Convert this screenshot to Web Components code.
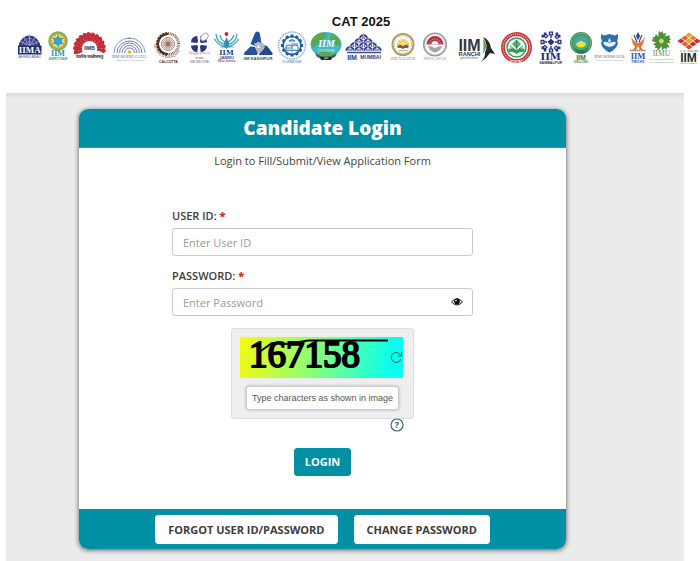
<!DOCTYPE html>
<html lang="en">
<head>
<meta charset="utf-8">
<meta name="viewport" content="width=device-width, initial-scale=1">
<title>CAT 2025 - Candidate Login</title>
<style>
  body {
    margin: 0;
    background: #fff;
    color: #444;
    font: 11px/16px "Open Sans", "Noto Sans", sans-serif;
  }
</style>
</head>
<body>
<login-page>
  <exam-header slot="header" heading="CAT 2025"></exam-header>
  <login-card heading="Candidate Login">
    <span slot="intro">Login to Fill/Submit/View Application Form</span>
    <login-field label="USER ID:" placeholder="Enter User ID"></login-field>
    <login-field label="PASSWORD:" placeholder="Enter Password" type="password"></login-field>
    <captcha-box code="167158"></captcha-box>
    <action-button primary>LOGIN</action-button>
    <action-button slot="footer">FORGOT USER ID/PASSWORD</action-button>
    <action-button slot="footer">CHANGE PASSWORD</action-button>
  </login-card>
</login-page>

<script>
'use strict';

const SERIF = 'font-family="Liberation Serif, serif"';
const SANS = 'font-family="Liberation Sans, sans-serif"';

// repeats a shape n times around a centre
const around = (n, cx, cy, shape, from = 0, step = 360 / n) =>
  Array.from({length: n}, (_, i) => `<g transform="rotate(${from + i * step} ${cx} ${cy})">${shape}</g>`).join('');

const text = (x, y, size, fill, str, more = SANS) =>
  `<text x="${x}" y="${y}" font-size="${size}" fill="${fill}" text-anchor="middle" ${more}>${str}</text>`;

// rows of scallops that build the pyramid of the Mumbai mark
const scallops = () => {
  let out = '';
  for (let row = 0; row < 4; row++) {
    for (let i = 0; i <= row; i++) {
      const x = 20.5 + (i - row / 2) * 9;
      const y = 9 + row * 4;
      out += `<path d="M${x - 5} ${y}a5 5 0 0 1 10 0z" fill="#2b348c" stroke="#fff" stroke-width=".6"/>
        <path d="M${x - 2.5} ${y}a2.5 2.5 0 0 1 5 0M${x} ${y}v-4" fill="none" stroke="#fff" stroke-width=".8"/>`;
    }
  }
  return out;
};

const diamonds = () => {
  let out = '';
  const colours = ['#e9a12c', '#e2622a', '#e2822a', '#c9302c', '#e9a12c', '#c9302c', '#e2622a', '#c9302c', '#d9502c'];
  const spots = [[12, 5], [8, 8], [16, 8], [4, 11], [12, 11], [20, 11], [8, 14], [16, 14], [12, 17]];
  spots.forEach(([x, y], i) => {
    out += `<path d="M${x} ${y - 2.5}l3.6 2.500-3.600 2.500-3.600-2.500z" fill="${colours[i]}"/>`;
  });
  return out;
};

// width of the drawing, name, shapes
const LOGOS = {
  ahmedabad: [31, 'IIM Ahmedabad', `
    <path d="M5 17v-3a11 12 0 0 1 21 0v3z" fill="#373c86"/>
    <g fill="none" stroke="#c3c6e4" stroke-width=".7">
      <path d="M15.5 16V4M15.5 16L9 6M15.5 16L22 6M15.5 16L6 11M15.5 16L25 11"/>
      <path d="M11 16a4.5 4.5 0 0 1 9 0M8 16a7.5 7.5 0 0 1 15 0" stroke-dasharray="1.5 1"/>
    </g>
    <path d="M4 15.5h23.5v9H4z" fill="#262a72"/>
    ${text(15.8, 23, 9, '#fff', 'IIMA', SERIF + ' font-weight="bold"')}
    ${text(15.8, 28, 3.6, '#5560a8', 'AHMEDABAD')}`],
  amritsar: [26, 'IIM Amritsar', `
    <circle cx="13" cy="11" r="8.5" fill="#d9e9a0" stroke="#6fb85e" stroke-width="2.5"/>
    ${around(12, 13, 11, '<circle cx="13" cy="4" r="1.5" fill="#e79a3c"/>')}
    ${around(6, 13, 11, '<path d="M13 5l2.5 4h-5z" fill="#2fa9b8"/>')}
    <circle cx="13" cy="11" r="3.8" fill="#3ba3c2"/>
    ${text(13, 26, 8, '#2c92a6', 'IIM', SERIF + ' font-weight="bold"')}
    ${text(13, 30, 3.6, '#36a8bd', 'AMRITSAR', SANS + ' font-weight="bold"')}`],
  bangalore: [38, 'IIM Bangalore', `
    ${around(13, 18.5, 18.5, '<path d="M16.8 11q-1.600-5 .2-9 3 0 4.200 2.300-2 1.200-2 6.700z" fill="#bf2d37"/>', -104, 17)}
    ${text(18.5, 20, 5, '#333', 'IIMB', SANS + ' font-weight="bold"')}
    ${text(18.5, 28, 4, '#222', 'तेजस्वि नावधीतमस्तु', SANS + ' font-weight="bold"')}`],
  bodhgaya: [41, 'IIM Bodh Gaya', `
    <g fill="none" stroke="#6f7cb8">
      <path d="M5 23a15.500 15 0 0 1 31 0" stroke-width=".8"/>
      <path d="M8 23a12.500 12 0 0 1 25 0M10.500 23a10 10 0 0 1 20 0M13 23a7.500 7.500 0 0 1 15 0M15.500 23a5 5 0 0 1 10 0"/>
    </g>
    <path d="M17 9q3.500 0 3.500-2.500Q20.500 9 24 9z" fill="#6f7cb8"/>
    <circle cx="20.500" cy="22" r="1.800" fill="#e3b23a"/>
    ${text(20.5, 28, 4.6, '#5d669c', 'IIM BODH GAYA', SERIF)}
    ${text(20.5, 31, 2, '#8a90b5', 'Indian Institute of Management')}`],
  calcutta: [37, 'IIM Calcutta', `
    ${around(11, 18, 14, '<path d="M16.800 2h2.400v3h-2.400z" fill="#5b2f22"/>', 190, 16)}
    <path d="M18 24a10 10 0 0 1 0-20" fill="none" stroke="#5b2f22" stroke-width="1.800"/>
    <path d="M18 3.500a10.500 10.500 0 0 1 0 21" fill="none" stroke="#8a6a58" stroke-width="2.800" stroke-dasharray="1 .7"/>
    <circle cx="18" cy="14" r="6.500" fill="#f3ebe6" stroke="#8a6a5e" stroke-width=".8"/>
    ${around(16, 18, 14, '<path d="M18 8.500v4" stroke="#8a5f52" stroke-width=".6"/>')}
    <circle cx="18" cy="14" r="2.300" fill="#a5705f"/>
    <path id="arc" d="M4 14a14 14 0 0 0 28 0" fill="none"/>
    <text font-size="2.600" fill="#5b3a30" ${SANS}><textPath href="#arc">INSTITUTE OF MANAGEMENT</textPath></text>
    ${text(18.5, 33, 3.5, '#4a2a20', 'CALCUTTA', SANS + ' font-weight="bold"')}`],
  indore: [25, 'IIM Indore', `
    ${around(4, 12, 14, '<path d="M7.500 7q4.500-3.500 9 0l-3.500 4.600q-1 .5-2 0z" fill="#2c3486"/>', -45)}
    <ellipse cx="17.500" cy="7" rx="4.500" ry="3" transform="rotate(-45 17.500 7)" fill="#fff" stroke="#777ba8" stroke-width=".7"/>
    ${text(12.5, 24, 3, '#a04a62', 'सिद्धिमूलं प्रबंधनम्')}
    ${text(12.5, 28.5, 3.4, '#666', 'भा.प्र.सं.')}
    ${text(12.5, 33, 3.4, '#666', 'IIM INDORE')}`],
  jammu: [30, 'IIM Jammu', `
    <circle cx="14.500" cy="4" r="1.900" fill="#d3242e"/>
    <g fill="none" stroke="#37a3c4" stroke-width="1.300">
      <path d="M4 4q1 10 10.500 10.500Q24 14 25 4M2.500 9q4 7 12 7.500Q23 16 26.500 9M8 5q1 6 6.500 7.500Q20 11 22 5"/>
    </g>
    <path d="M14.500 7l3 7-3 5-3-5zM7 17.500q3-2 7.500-1 5-1 8 1-4-.5-8 .5-4-1-7.500-.5z" fill="#2f8fb8"/>
    ${text(14.5, 24.5, 7, '#20408e', 'IIM', 'font-family="DejaVu Serif, serif" font-weight="bold"')}
    ${text(14.5, 28.5, 4, '#2b5a9c', 'JAMMU', SANS + ' font-weight="bold"')}
    ${text(14.5, 32, 2.8, '#b8424e', 'IIM at Jammu', SANS + ' font-weight="bold"')}`],
  kashipur: [33, 'IIM Kashipur', `
    <path d="M15.500 1.500q1.500 0 2.300 1.800L19.500 13l-4-1-2.500 4-4.500-2 4.500-11q.7-1.500 2.500-1.500z" fill="#24539b"/>
    <path d="M8.500 16.500l4.500.5 3 6.500-1.500 1.500H2.500q-1-1 0-2.500z" fill="#24539b"/>
    <path d="M21 15l4 1 5.500 7q.5 1.500-.5 2H17l1-3.500 3.500-2z" fill="#1f4a90"/>
    <path d="M12 13h9l2 4-4 5.500h-3.500z" fill="#b1b6c4"/>
    <path d="M16.500 14l2 4h-4z" fill="#e6e8ee"/>
    ${text(16, 29.5, 4.2, '#2a4c8e', 'IIM KASHIPUR', SANS + ' font-weight="bold"')}`],
  kozhikode: [34, 'IIM Kozhikode', `
    <circle cx="17" cy="15.500" r="13.500" fill="none" stroke="#7ba6c9" stroke-width="1.600" stroke-dasharray="1 .8"/>
    <circle cx="17" cy="15.500" r="9" fill="#eef5fa" stroke="#2a6ca9" stroke-width="1.500"/>
    ${around(12, 17, 15.5, '<path d="M15.500 4.500h3v3h-3z" fill="#1f5f9e"/>')}
    <path d="M11 16q3-2 6 0 3-2 6 0v5q-3-2-6 0-3-2-6 0zM14 11q3-3 6 0z" fill="none" stroke="#2a6ca9" stroke-width=".9"/>
    <path d="M11 18h6M17 13v8M18 14h5" stroke="#2a6ca9" stroke-width=".8"/>
    ${text(17, 33, 3.2, '#2a6ca9', 'KOZHIKODE')}`],
  lucknow: [34, 'IIM Lucknow', `
    <ellipse cx="17" cy="14.500" rx="15.500" ry="12.500" fill="#43b9c0"/>
    <path d="M4 8q6-7 13-5 2 3-2 5l-4 5q-4 1-7 5-3-5 0-10zM22 3q8 3 10 11-4 3-7-1l-4-4zM9 21l9-1 6 3-5 4q-6 0-10-6z" fill="#57a850"/>
    <path d="M6 23q11 7 22 0l-2 4q-9 5-18 0z" fill="#46604d"/>
    <path d="M11 27h12l-1 3H12z" fill="#1f2521"/>
    ${text(17.5, 17, 10, '#f4fbf6', 'IIM', SERIF + ' font-style="italic" font-weight="bold"')}
    ${text(17, 22, 3.2, '#e8f5ee', 'LUCKNOW', SANS)}
    ${text(17, 29, 2, '#fff', 'सुप्रबंधे')}`],
  mumbai: [43, 'IIM Mumbai', `
    ${scallops()}
    <path d="M4 22.500h34" stroke="#3f489a" stroke-width="1.400"/>
    <circle cx="20.500" cy="7.500" r="1.200" fill="#d88a3c"/>
    ${text(9, 30, 7, '#2b348c', 'IIM', SANS + ' font-weight="bold"')}
    ${text(27.5, 29, 5, '#2b348c', 'MUMBAI', SANS + ' font-weight="bold"')}`],
  nagpur: [32, 'IIM Nagpur', `
    <circle cx="17" cy="14.500" r="10.500" fill="#fff" stroke="#b79a5e" stroke-width="2"/>
    <circle cx="17" cy="14.500" r="8.500" fill="none" stroke="#7a6a50" stroke-width=".6" stroke-dasharray="1 1"/>
    <path d="M11 15a6 6 0 0 1 12 0z" fill="#f2bd2d"/>
    ${around(5, 17, 15, '<path d="M17 8v6" stroke="#fff" stroke-width=".7"/>', -60, 30)}
    <path d="M11 16q3-2 6 0 3-2 6 0l-1 2q-3-1-5 1-3-2-5-1z" fill="#6a5e4c"/>
    <path d="M13 20.500h8" stroke="#c0ad80"/>
    ${text(17, 30, 4.2, '#888', 'IIM NAGPUR', SERIF)}`],
  raipur: [34, 'IIM Raipur', `
    <circle cx="17" cy="14.500" r="11.300" fill="#fff" stroke="#9a9a9e" stroke-width="1.600"/>
    <circle cx="17" cy="14.500" r="9.500" fill="none" stroke="#b5b5b8" stroke-width=".8" stroke-dasharray="1 .8"/>
    <path d="M8.500 14.500a8.500 8.500 0 0 1 17 0z" fill="#b5323e"/>
    <path d="M13.500 14.500a3.500 3.500 0 0 1 7 0z" fill="#fff"/>
    ${around(7, 17, 14.5, '<path d="M17 8v2" stroke="#e9b9bd" stroke-width=".6"/>', -75, 25)}
    <path d="M10 16q3.500 0 7 2 3.500-2 7-2-1 5-7 6.500-6-1.500-7-6.500z" fill="#a3a5aa"/>
    ${text(17, 30, 4.2, '#b98a8f', 'IIM RAIPUR', SERIF)}`],
  ranchi: [46, 'IIM Ranchi', `
    ${text(17.5, 20.5, 16, '#33363a', 'IIM', SANS + ' font-weight="bold"')}
    ${text(17.5, 25.5, 5.6, '#33363a', 'RANCHI', SANS + ' font-weight="bold"')}
    ${text(17.5, 29, 3.2, '#777', 'सुधीर्धर्मेण जीवतः')}
    <path d="M31 7q7 3 8 11l4 6-5-1q-3 5-9 9 5-6 4-10 4-6-2-15z" fill="#25282a"/>
    <path d="M31 9q4 4 3 9l-3 6q1-8 0-15z" fill="#6aa640"/>`],
  rohtak: [37, 'IIM Rohtak', `
    <circle cx="18.500" cy="17.500" r="13.500" fill="#fff" stroke="#c63a3f" stroke-width="4"/>
    <circle cx="18.500" cy="17.500" r="13.500" fill="none" stroke="#f2c9c9" stroke-width="1.200" stroke-dasharray="1 1.200"/>
    <circle cx="18.500" cy="17.500" r="9.500" fill="#eef7f0" stroke="#3d9860" stroke-width="1.500"/>
    <path d="M10.500 19q4.500-2 8 1 3.500-3 8-1v3q-4.500-1-8 2-3.500-3-8-2z" fill="#3d9860"/>
    <path d="M18.500 9.500l4.500 4.500-4.500 5-4.500-5z" fill="#5fae7a"/>
    <path d="M12 16l4 3M25 16l-4 3M18.500 10v9" stroke="#2f8552" stroke-width=".9"/>
    ${text(18.5, 32.5, 3, '#fff', 'ROHTAK')}`],
  sambalpur: [32, 'IIM Sambalpur', `
    <g fill="#2b348c">
      <path d="M13.500 9.500h5v5h-5z" transform="rotate(45 16 12)"/>
      ${around(4, 16, 12, '<path d="M13.800 1.500h4.400v4h-4.400zM15.300 5h1.400v3h-1.400zM22 4l2.800 2.800L22 9.600l-2.800-2.800z"/>')}
      ${around(4, 16, 12, '<path d="M8.800 2.500h2.600v2.600H8.800zM20.600 2.500h2.600v2.600h-2.600z"/>')}
    </g>
    ${around(4, 16, 12, '<path d="M15.200 2.800h1.600v1.400h-1.600zM21.300 6.200h1.400v1.300h-1.400z" fill="#fff"/>')}
    ${text(15.7, 29.5, 10, '#262b7c', 'IIM', 'font-family="DejaVu Serif, serif" font-weight="bold"')}
    ${text(15.7, 33.5, 3.6, '#262b7c', 'SAMBALPUR', SANS + ' font-weight="bold"')}`],
  shillong: [26, 'IIM Shillong', `
    <circle cx="14" cy="13" r="9.500" fill="#4fa878" stroke="#3a8f63" stroke-width="3"/>
    <circle cx="14" cy="13" r="9.500" fill="none" stroke="#b9dcc8" stroke-width="1" stroke-dasharray="1 1"/>
    <path d="M8 13a6 5 0 0 1 12 0z" fill="#3da7c4"/>
    <path d="M9 13.500a5 4 0 0 0 10 0l-5-3z" fill="#ece23c"/>
    <path d="M7 18q7 4 14 0l-2 4q-5 3-10 0z" fill="#2c7f55"/>
    ${text(14, 29.5, 7, '#2b7f58', 'IIM', SANS + ' font-weight="bold"')}
    ${text(14, 33, 2.8, '#3a8f63', 'SHILLONG', SANS + ' font-weight="bold"')}`],
  sirmaur: [35, 'IIM Sirmaur', `
    <path d="M8 4l3 1.500 5.500-1.500L22 5.500 25 4v4l-1 3 1 2q-1 6-8.500 9.500Q9 19 8 13l1-2-1-3z" fill="#2e6fae"/>
    <path d="M10 12.500q3-2 6.500 1 3.500-3 6.500-1-1 3.500-6.500 4.500-5.500-1-6.500-4.500z" fill="#eef5fb"/>
    <path d="M16.500 8l1.500 2.500-1.500 4-1.500-4z" fill="#cfe0f0"/>
    ${text(16.5, 27.5, 4.8, '#6a7484', 'IIM SIRMAUR', SERIF)}
    ${text(16.5, 30.5, 2, '#999', 'Indian Institute of Management')}`],
  trichy: [20, 'IIM Tiruchirappalli', `
    <path d="M10 2l2 4-1.500 3.500h-1L8 6z" fill="#2d4a90"/>
    <path d="M3 5q1 6 7 8 6-2 7-8-1 9-4 12l2 3h-3l-2-4-2 4H5l2-3Q4 14 3 5z" fill="#e3763a"/>
    <path d="M6 5l3 7M14 5l-3 7" stroke="#37549a" stroke-width="1.300"/>
    <path d="M2 20.500h16" stroke="#c05a48" stroke-width="1.300" stroke-dasharray="1.500 .7"/>
    ${text(10, 29, 8.5, '#2a559f', 'IIM', SERIF + ' font-weight="bold"')}
    ${text(10, 33, 3.6, '#2a559f', 'TRICHY', SANS + ' font-weight="bold"')}`],
  udaipur: [29, 'IIM Udaipur', `
    ${around(5, 13.5, 11, '<path d="M12 9.500q-4-3-2.500-8l2 1.500 1.500-2 1 2.500 3-1q-.5 4-2.500 7z" fill="#4c9138"/>', 10)}
    <path d="M11.500 9.500l2.500-1 2 2-1 2.500-2.500.5-1.500-2z" fill="#d9dc5a"/>
    ${text(13.5, 26, 7.6, '#5c8a4a', 'IIMU', SERIF)}
    ${text(13.5, 30, 2.4, '#6c9a58', 'INDIAN INSTITUTE OF')}
    ${text(13.5, 32.5, 2, '#6c9a58', 'MANAGEMENT UDAIPUR')}`],
  vizag: [23, 'IIM Visakhapatnam', `
    ${diamonds()}
    ${text(12, 21.5, 2, '#333', 'भा.प्र.सं. विशाखापट्टनम')}
    ${text(11.5, 31.5, 12, '#2a2a2a', 'IIM', SANS + ' font-weight="bold"')}
    ${text(11.5, 34, 2, '#444', 'VISAKHAPATNAM')}`],
};

class InstituteLogo extends HTMLElement {
  connectedCallback() {
    const [width, title, shapes] = LOGOS[this.getAttribute('name')];
    this.attachShadow({mode: 'open'}).innerHTML = `
      <style>
        :host { display: block; flex: none; }
        svg { display: block; overflow: visible; }
      </style>
      <svg width="${width}" height="35" viewBox="0 0 ${width} 35" role="img" aria-label="${title}">${shapes}</svg>
    `;
  }
}

class ExamHeader extends HTMLElement {
  connectedCallback() {
    this.attachShadow({mode: 'open'}).innerHTML = `
      <style>
        :host { display: block; padding: 14px 0 28px 14px; }
        h1 {
          margin: 0;
          padding-left: 8px;
          color: #111;
          font: bold 13px/16px "Liberation Sans", Arial, sans-serif;
          text-align: center;
        }
        .strip {
          display: flex;
          justify-content: space-between;
        }
      </style>
      <h1>${this.getAttribute('heading')}</h1>
      <div class="strip">
        ${Object.keys(LOGOS).map(name => `<institute-logo name="${name}"></institute-logo>`).join('')}
      </div>
    `;
  }
}

class LoginPage extends HTMLElement {
  connectedCallback() {
    this.attachShadow({mode: 'open'}).innerHTML = `
      <style>
        :host { display: flex; flex-direction: column; min-height: 100vh; }
        main {
          flex: 1;
          margin: 0 16px 0 6px;
          padding: 16px 118px 12px 73px;
          background: #ebebeb linear-gradient(#dcdcdc, #ebebeb) no-repeat 0 0 / 100% 6px;
        }
      </style>
      <slot name="header"></slot>
      <main><slot></slot></main>
    `;
  }
}

class LoginCard extends HTMLElement {
  connectedCallback() {
    this.attachShadow({mode: 'open'}).innerHTML = `
      <style>
        :host {
          display: block;
          overflow: hidden;
          border-radius: 9px;
          background: #fff;
          box-shadow: 0 1px 5px #555;
        }
        h2 {
          margin: 0;
          padding: 7px 0;
          border-bottom: 1px solid #6a7f82;
          background: #008fa3;
          color: #fff;
          font-size: 19px;
          font-weight: 800;
          line-height: 24px;
          text-align: center;
        }
        .intro {
          margin: 0;
          padding: 5px 0 39px;
          text-align: center;
        }
        form {
          display: flex;
          flex-direction: column;
          align-items: center;
          padding: 0 93px 33px;
        }
        footer {
          display: flex;
          justify-content: center;
          gap: 16px;
          padding: 6px 0 5px;
          background: #008fa3;
        }
      </style>
      <h2>${this.getAttribute('heading')}</h2>
      <p class="intro"><slot name="intro"></slot></p>
      <form><slot></slot></form>
      <footer><slot name="footer"></slot></footer>
    `;
  }
}

class LoginField extends HTMLElement {
  connectedCallback() {
    const type = this.getAttribute('type') || 'text';
    this.attachShadow({mode: 'open'}).innerHTML = `
      <style>
        :host { display: block; align-self: stretch; margin-bottom: 12px; }
        label {
          display: block;
          margin-bottom: 4px;
          color: #3d3d3d;
          font-weight: 600;
        }
        label span { color: #d9252b; font-weight: 800; }
        .box {
          display: flex;
          align-items: center;
          border: 1px solid #ccc;
          border-radius: 3px;
          background: #fff;
        }
        input {
          flex: 1;
          min-width: 0;
          height: 26px;
          padding: 0 10px;
          border: 0;
          outline: 0;
          background: none;
          color: #444;
          font: inherit;
          box-sizing: border-box;
        }
        input::placeholder { color: #999; opacity: 1; }
        button {
          display: flex;
          padding: 0;
          margin-right: 9px;
          border: 0;
          background: none;
        }
      </style>
      <label for="field">${this.getAttribute('label')} <span>*</span></label>
      <div class="box">
        <input id="field" type="${type}" placeholder="${this.getAttribute('placeholder')}">
        ${type === 'password' ? `
          <button type="button" aria-label="Show password">
            <svg width="12" height="10" viewBox="0 0 12 10">
              <path d="M.5 5Q6-1.500 11.500 5 6 11 .5 5z" fill="#fff" stroke="#222"/>
              <circle cx="6" cy="4.500" r="2.900" fill="#111"/>
              <circle cx="5" cy="3.500" r=".8" fill="#fff"/>
            </svg>
          </button>` : ''}
      </div>
    `;
  }
}

class CaptchaBox extends HTMLElement {
  connectedCallback() {
    this.attachShadow({mode: 'open'}).innerHTML = `
      <style>
        :host { display: block; }
        .panel {
          padding: 8px;
          border: 1px solid #ddd;
          border-radius: 3px;
          background: #eee;
        }
        .image {
          display: flex;
          align-items: center;
          justify-content: space-between;
          width: 163px;
          height: 41px;
          margin: 0 2px 8px 0;
          background: linear-gradient(100deg, #f6fa10, #7dff80 50%, #08fff0 92%);
        }
        svg { display: block; overflow: visible; }
        button { display: flex; padding: 0; border: 0; background: none; }
        input {
          display: block;
          width: 153px;
          height: 24px;
          margin: 0 0 0 6px;
          padding: 0 5px;
          border: 1px solid #ccc;
          border-radius: 3px;
          box-shadow: 0 0 3px #aaa;
          box-sizing: border-box;
          color: #444;
          font: 9px "Liberation Sans", Arial, sans-serif;
        }
        input::placeholder { color: #555; opacity: 1; }
        .help { margin: -1px 10px 16px auto; }
      </style>
      <div class="panel">
        <div class="image">
          <svg width="150" height="41" viewBox="0 0 150 41" role="img" aria-label="Captcha">
            <text x="9" y="30" font-family="Liberation Serif, serif" font-size="37" fill="#000" stroke="#000" stroke-width="2">${this.getAttribute('code')}</text>
            <path d="M18 16l14-10 16 1 20-3.500h80" fill="none" stroke="#000" stroke-width="2"/>
          </svg>
          <button type="button" aria-label="Reload captcha">
            <svg width="13" height="13" viewBox="0 0 13 13" fill="none" stroke="#22665f">
              <path d="M10.500 4A5 5 0 1 0 11 8"/>
              <path d="M11.500 1v4h-4"/>
            </svg>
          </button>
        </div>
        <input type="text" aria-label="Captcha characters" placeholder="Type characters as shown in image">
      </div>
      <button class="help" type="button" aria-label="Help">
        <svg width="14" height="14" viewBox="0 0 14 14">
          <circle cx="7" cy="7" r="6" fill="#fff" stroke="#456873" stroke-width="1.200"/>
          <text x="7" y="10" font-family="Open Sans, sans-serif" font-size="9" font-weight="700" fill="#34545f" text-anchor="middle">?</text>
        </svg>
      </button>
    `;
  }
}

class ActionButton extends HTMLElement {
  connectedCallback() {
    this.attachShadow({mode: 'open'}).innerHTML = `
      <style>
        :host { display: block; }
        button {
          display: block;
          padding: 6px 12px 5px;
          border: 1px solid #fff;
          border-radius: 3px;
          background: #fff;
          color: #3d3d3d;
          font: inherit;
          font-weight: 700;
        }
        :host([primary]) button {
          padding: 5px 10px;
          border-color: #008fa3;
          background: #008fa3;
          color: #fff;
        }
      </style>
      <button type="button"><slot></slot></button>
    `;
  }
}

customElements.define('institute-logo', InstituteLogo);
customElements.define('exam-header', ExamHeader);
customElements.define('login-page', LoginPage);
customElements.define('login-card', LoginCard);
customElements.define('login-field', LoginField);
customElements.define('captcha-box', CaptchaBox);
customElements.define('action-button', ActionButton);
</script>
</body>
</html>
